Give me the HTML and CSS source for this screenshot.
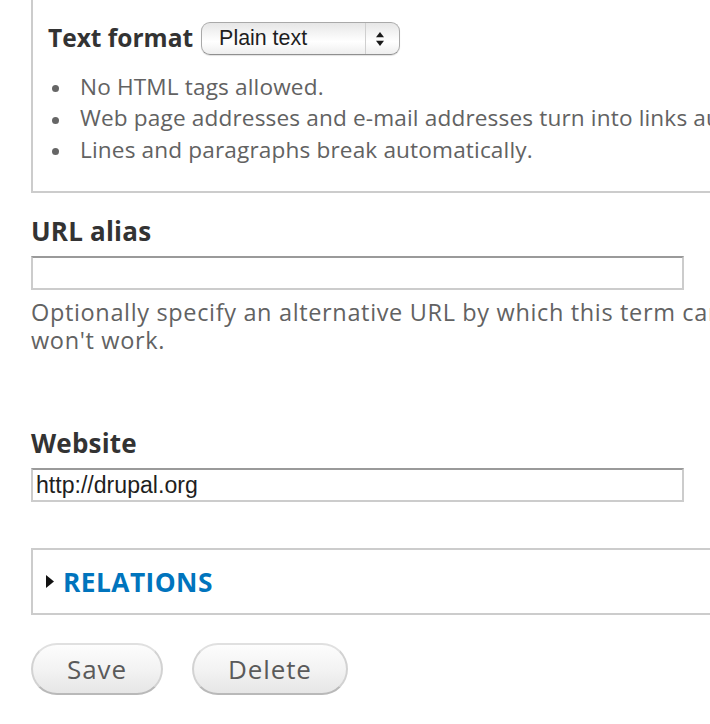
FILE: index.html
```html
<!DOCTYPE html>
<html lang="en">
<head>
<meta charset="utf-8">
<title>Edit term</title>
<link rel="stylesheet" href="styles.css">
</head>
<body>
<div class="page">
  <div class="fieldset format">
    <div class="format-row">
      <span class="format-label">Text format</span>
      <div class="select">
        <span class="select-value">Plain text</span>
        <span class="select-arrows">
          <svg width="8" height="14" viewBox="0 0 8 14"><polygon points="0,5.3 4,0 8,5.3" fill="#1a1a1a"/><polygon points="0,8.7 4,14 8,8.7" fill="#1a1a1a"/></svg>
        </span>
      </div>
    </div>
    <ul class="tips">
      <li>No HTML tags allowed.</li>
      <li>Web page addresses and e-mail addresses turn into links automatically.</li>
      <li>Lines and paragraphs break automatically.</li>
    </ul>
  </div>

  <div class="form-item url-item">
    <label class="label" for="alias">URL alias</label>
    <input class="text-input" id="alias" type="text" value="">
    <div class="description">
      <div class="desc-line">Optionally specify an alternative URL by which this term can be accessed. Use a relative path and don't add a trailing slash or the URL alias</div>
      <div class="desc-line">won't work.</div>
    </div>
  </div>

  <div class="form-item website-item">
    <label class="label" for="website">Website</label>
    <input class="text-input" id="website" type="text" value="http://drupal.org">
  </div>

  <div class="fieldset relations">
    <svg class="toggle" width="8" height="13" viewBox="0 0 8 13"><polygon points="0,0 8,6.5 0,13" fill="#111"/></svg>
    <span class="relations-link">RELATIONS</span>
  </div>

  <div class="actions">
    <button class="button" type="button">Save</button>
    <button class="button" type="button">Delete</button>
  </div>
</div>
</body>
</html>
```
FILE: styles.css
```css
html, body {
  margin: 0;
  padding: 0;
  overflow: hidden;
  background: #fff;
}

body {
  font-family: "Open Sans", "DejaVu Sans", sans-serif;
  color: #333;
}

.page {
  padding-left: 31px;
  width: 1300px;
}

.fieldset {
  border: 2px solid #cccccc;
  box-sizing: border-box;
}

.format {
  width: 900px;
  border-top: none;
  padding: 22px 0 25.5px 15px;
}

.format-row {
  display: flex;
  align-items: center;
  height: 33px;
}

.format-label {
  font-weight: 700;
  font-size: 24.5px;
  color: #333;
  line-height: 33px;
  padding-bottom: 3px;
  margin-right: 8px;
  white-space: nowrap;
}

.select {
  display: flex;
  align-items: stretch;
  width: 199px;
  height: 33px;
  box-sizing: border-box;
  border: 1px solid #a9a9a9;
  border-bottom-color: #8f8f8f;
  border-radius: 9px;
  background: linear-gradient(#e6e6e6 0%, #f5f5f5 35%, #ffffff 60%, #eeeeee 100%);
  box-shadow: 0 1px 1px rgba(0,0,0,0.12);
}

.select-value {
  flex: 1;
  font-family: "Liberation Sans", Arial, sans-serif;
  font-size: 21.4px;
  line-height: 31px;
  color: #1e1e1e;
  padding-left: 17px;
  border-right: 1px solid #cfcfcf;
}

.select-arrows {
  width: 33px;
  display: flex;
  align-items: center;
  padding-left: 10px;
  box-sizing: border-box;
}

.select-arrows svg {
  display: block;
}

.tips {
  list-style: none;
  margin: 15.5px 0 0;
  padding: 0;
  font-size: 22.6px;
  letter-spacing: 0.15px;
  line-height: 31.7px;
  color: #626262;
  white-space: nowrap;
}

.tips li::before {
  content: "";
  display: inline-block;
  width: 7px;
  height: 7px;
  border-radius: 50%;
  background: #666;
  vertical-align: middle;
  margin-left: 4px;
  margin-right: 21px;
}

.form-item {
  width: 653px;
}

.url-item {
  margin-top: 22.3px;
}

.website-item {
  margin-top: 73px;
}

.label {
  display: block;
  font-weight: 700;
  font-size: 26px;
  letter-spacing: 0.2px;
  line-height: 32px;
  color: #333;
}

.text-input {
  display: block;
  width: 653px;
  height: 34px;
  box-sizing: border-box;
  margin: 9px 0 0;
  padding: 0 3px;
  border: 2px solid #cccccc;
  border-top-color: #9a9a9a;
  border-radius: 0;
  background: #fff;
  font-family: "Liberation Sans", Arial, sans-serif;
  font-size: 23.1px;
  color: #1e1e1e;
  outline: none;
}

.description {
  margin-top: 9px;
  font-size: 23.5px;
  letter-spacing: 0.65px;
  line-height: 27.5px;
  color: #626262;
  white-space: nowrap;
}

.relations {
  width: 900px;
  margin-top: 45.5px;
  padding: 16px 0 15px 13px;
  display: flex;
  align-items: center;
}

.toggle {
  display: block;
  margin-right: 9px;
}

.relations-link {
  font-weight: 700;
  font-size: 26.3px;
  letter-spacing: 0.45px;
  line-height: 32px;
  color: #0074bd;
}

.actions {
  display: flex;
  gap: 29px;
  margin-top: 28px;
}

.button {
  font-family: "Open Sans", "DejaVu Sans", sans-serif;
  font-size: 26px;
  letter-spacing: 0.9px;
  line-height: 48px;
  height: 52px;
  box-sizing: border-box;
  padding: 0 34px;
  color: #5a5a5a;
  border: 2px solid #e0e0e0;
  border-left-color: #d2d2d2;
  border-right-color: #d2d2d2;
  border-bottom-color: #b9b9b9;
  border-radius: 40px;
  background: linear-gradient(#fdfdfd 0%, #f3f3f3 50%, #e6e6e6 100%);
  cursor: pointer;
}
```
